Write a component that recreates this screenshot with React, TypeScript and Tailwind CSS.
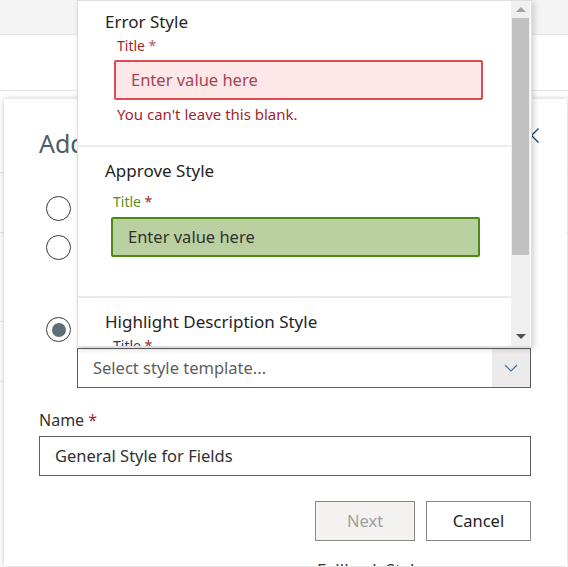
import React from 'react';

const font = { fontFamily: '"Noto Sans", "Open Sans", Arial, sans-serif' };

function Radio({ checked = false }: { checked?: boolean }) {
  return (
    <div className="w-[25px] h-[25px] rounded-full border border-[#3b3a39] flex items-center justify-center shrink-0 bg-white">
      {checked && <div className="w-[14px] h-[14px] rounded-full bg-[#5e6e76]" />}
    </div>
  );
}

function StylePreview() {
  return (
    <div className="absolute left-[77px] top-0 w-[455px] h-[347px] bg-white border border-[#e1dfdd] shadow-[2px_2px_6px_rgba(0,0,0,0.18)] flex overflow-hidden z-10">
      <div className="flex-1 overflow-hidden">
        {/* Error */}
        <div className="pt-[10px] pl-[27px] h-[146px] border-b-2 border-[#ebebeb]">
          <div className="text-[17px] leading-[22px] text-[#252423]">Error Style</div>
          <div className="pl-[12px] mt-[4px] text-[14px] leading-[18px] text-[#a4262c]">
            Title <span className="text-[#b05a62]">*</span>
          </div>
          <div className="ml-[9px] mt-[5px] w-[369px] h-[40px] bg-[#fde7e9] border-2 border-[#dc4b50] rounded-[2px] flex items-center pl-[15px] text-[16.5px] text-[#a4454f]">
            Enter value here
          </div>
          <div className="pl-[12px] mt-[5px] text-[15px] leading-[18px] text-[#a4262c]">You can't leave this blank.</div>
        </div>
        {/* Approve */}
        <div className="pt-[13px] pl-[27px] h-[151px] border-b-2 border-[#ebebeb]">
          <div className="text-[17px] leading-[22px] text-[#252423]">Approve Style</div>
          <div className="pl-[8px] mt-[11px] text-[14px] leading-[18px] text-[#5b8a1d]">
            Title <span className="text-[#a4262c]">*</span>
          </div>
          <div className="ml-[6px] mt-[6px] w-[369px] h-[40px] bg-[#bad0a0] border-2 border-[#4f8a10] rounded-[2px] flex items-center pl-[15px] text-[16.5px] text-[#323130]">
            Enter value here
          </div>
        </div>
        {/* Highlight */}
        <div className="pt-[13px] pl-[27px]">
          <div className="text-[17px] leading-[22px] text-[#252423]">Highlight Description Style</div>
          <div className="pl-[8px] mt-[4px] text-[14px] leading-[18px] text-[#243a5e]">
            Title <span className="text-[#a4262c]">*</span>
          </div>
        </div>
      </div>
      {/* scrollbar */}
      <div className="w-[19px] bg-[#f0f0f0] flex flex-col items-center mr-[1px]">
        <div className="h-[17px] flex items-center justify-center">
          <div className="w-0 h-0 border-l-[5px] border-r-[5px] border-b-[5px] border-l-transparent border-r-transparent border-b-[#a3a3a3]" />
        </div>
        <div className="w-[17px] h-[237px] bg-[#c1c1c1]" />
        <div className="flex-1" />
        <div className="h-[17px] flex items-center justify-center mb-[1px]">
          <div className="w-0 h-0 border-l-[5px] border-r-[5px] border-t-[5px] border-l-transparent border-r-transparent border-t-[#505050]" />
        </div>
      </div>
    </div>
  );
}

export default function App() {
  return (
    <div className="relative w-[568px] h-[567px] overflow-hidden bg-white" style={font}>
      {/* page behind */}
      <div className="flex flex-col">
        <div className="h-[35px] bg-[#f4f4f4] border-b border-[#e6e6e6]" />
        <div className="h-[56px] border-b border-[#e6e6e6]" />
        <div className="h-[82px] border-b border-[#e6e6e6]" />
        <div className="h-[60px] border-b border-[#e6e6e6]" />
        <div className="h-[89px] border-b border-[#e6e6e6]" />
        <div className="h-[60px] border-b border-[#e6e6e6]" />
      </div>

      {/* dialog */}
      <div className="absolute left-[4px] top-[99px] w-[563px] h-[467px] bg-white shadow-[0_0_6px_rgba(0,0,0,0.22)] pl-[35px] pr-[36px] overflow-hidden">
        <div className="absolute right-[28px] top-[29px]">
          <svg width="15" height="15" viewBox="0 0 15 15" fill="none" stroke="#1b3a66" strokeWidth="1.2">
            <path d="M0.5 0.5 L14.5 14.5 M14.5 0.5 L0.5 14.5" />
          </svg>
        </div>
        <h2 className="pt-[27px] text-[25px] leading-[34px] text-[#4f5b66]">Add</h2>

        <div className="mt-[36px] pl-[7px] flex flex-col">
          <div className="h-[25px]">
            <Radio />
          </div>
          <div className="mt-[14px] h-[82px]">
            <Radio />
          </div>
          <div className="h-[25px]">
            <Radio checked />
          </div>
        </div>

        <div className="ml-[38px] mt-[6px] h-[40px] border border-[#605e5c] flex">
          <div className="flex-1 flex items-center pl-[15px] text-[16.5px] text-[#605e5c]">Select style template...</div>
          <div className="w-[38px] bg-[#edebe9] flex items-center justify-center">
            <svg width="14" height="8" viewBox="0 0 14 8" fill="none" stroke="#3a6ea5" strokeWidth="1.1">
              <path d="M1 1 L7 7 L13 1" />
            </svg>
          </div>
        </div>

        <div className="mt-[21px] text-[16px] leading-[22px] text-[#323130]">
          Name <span className="text-[#a4262c]">*</span>
        </div>
        <div className="mt-[5px] h-[40px] border border-[#605e5c] flex items-center pl-[15px] text-[16.5px] text-[#323130]">
          General Style for Fields
        </div>

        <div className="mt-[25px] flex justify-end gap-[11px]">
          <div className="w-[100px] h-[40px] bg-[#f3f2f1] border border-[#8a8886] flex items-center justify-center text-[16.5px] text-[#a19f9d]">Next</div>
          <div className="w-[105px] h-[40px] bg-white border border-[#8a8886] flex items-center justify-center text-[16.5px] text-[#201f1e]">Cancel</div>
        </div>

        <div className="mt-[18px] ml-[278px] text-[17px] leading-[22px] text-[#323130] whitespace-nowrap">
          Fallback Style
        </div>
      </div>

      <StylePreview />
    </div>
  );
}
